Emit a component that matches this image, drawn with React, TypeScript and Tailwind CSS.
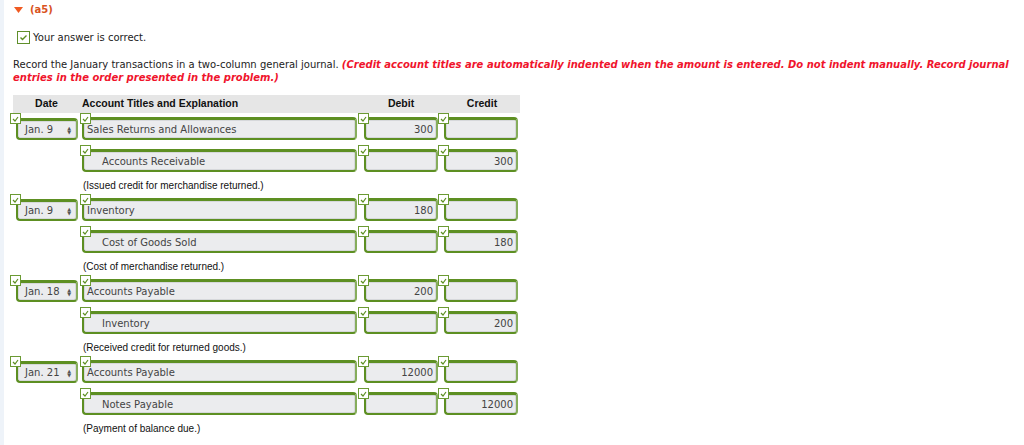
import React from "react";

type Line = { account: string; debit?: string; credit?: string };
type Entry = { date: string; lines: Line[]; note: string };

const entries: Entry[] = [
  {
    date: "Jan. 9",
    lines: [
      { account: "Sales Returns and Allowances", debit: "300" },
      { account: "Accounts Receivable", credit: "300" },
    ],
    note: "(Issued credit for merchandise returned.)",
  },
  {
    date: "Jan. 9",
    lines: [
      { account: "Inventory", debit: "180" },
      { account: "Cost of Goods Sold", credit: "180" },
    ],
    note: "(Cost of merchandise returned.)",
  },
  {
    date: "Jan. 18",
    lines: [
      { account: "Accounts Payable", debit: "200" },
      { account: "Inventory", credit: "200" },
    ],
    note: "(Received credit for returned goods.)",
  },
  {
    date: "Jan. 21",
    lines: [
      { account: "Accounts Payable", debit: "12000" },
      { account: "Notes Payable", credit: "12000" },
    ],
    note: "(Payment of balance due.)",
  },
];

const verdana = "font-['DejaVu_Sans',Verdana,sans-serif]";
const tahoma = "font-['Liberation_Sans',Arial,sans-serif]";

function Tick({ className = "" }: { className?: string }) {
  return (
    <span
      className={`absolute flex h-[11px] w-[11px] items-center justify-center border border-[#6b9a33] bg-white ${className}`}
    >
      <svg width="7" height="6" viewBox="0 0 7 6">
        <polyline points="1,3 3,5 6,1" fill="none" stroke="#5d8f22" strokeWidth="1.2" />
      </svg>
    </span>
  );
}

const box =
  "h-[23px] rounded-[4px] border-2 border-t-[3px] border-[#5d8f22] border-r-[#86ad5c] bg-[#ebecee] shadow-[inset_0_0_0_1px_#d6d8db] text-[10px] text-[#444] flex items-center";

function JournalLine({ line, date }: { line: Line; date?: string }) {
  const credit = !!line.credit;
  return (
    <div className="flex h-[32px]">
      <div className="relative w-[67px]">
        {date && (
          <>
            <Tick className="left-[-3px] top-0" />
            <div
              className={`${box} ml-[3px] mt-[5px] w-[62px] !h-[22px] justify-between pl-[7px] pr-[5px]`}
            >
              <span>{date}</span>
              <span className="flex flex-col text-[5px] leading-[4px] text-[#555]">
                <span>▲</span>
                <span>▼</span>
              </span>
            </div>
          </>
        )}
      </div>
      <div className="relative w-[278px]">
        <Tick className="left-0 top-0" />
        <div className={`${box} ml-[2px] mt-[4px] w-[275px] ${credit ? "pl-[18px]" : "pl-[3px]"}`}>
          {line.account}
        </div>
      </div>
      <div className="relative w-[80px]">
        <Tick className="left-0 top-0" />
        <div className={`${box} ml-[6px] mt-[4px] w-[74px] justify-end pr-[3px]`}>{line.debit}</div>
      </div>
      <div className="relative w-[82px]">
        <Tick className="left-0 top-0" />
        <div className={`${box} ml-[6px] mt-[4px] w-[74px] justify-end pr-[3px]`}>{line.credit}</div>
      </div>
    </div>
  );
}

export default function App() {
  return (
    <div className={`min-h-[445px] w-[1024px] border-l-[4px] border-[#eef3f9] bg-white ${verdana}`}>
      <div className="flex h-[18px] items-center gap-[7px] pl-[10px] pt-[1px]">
        <svg width="9" height="6" viewBox="0 0 9 6">
          <polygon points="0,0 9,0 4.5,6" fill="#f05a22" />
        </svg>
        <span className="text-[10px] font-bold text-[#d9531e]">(a5)</span>
      </div>
      <div className="mt-[12px] flex items-center gap-[3px] pl-[13px]">
        <span className="flex h-[13px] w-[13px] items-center justify-center border border-[#5f8f2a] bg-white">
          <svg width="9" height="7" viewBox="0 0 9 7">
            <polyline points="1.5,3.5 3.5,5.5 7.5,1.5" fill="none" stroke="#5d8f22" strokeWidth="1.4" />
          </svg>
        </span>
        <span className="text-[10px] text-[#222]">Your answer is correct.</span>
      </div>
      <p className="mt-[13px] pl-[9px] pr-[4px] text-[10px] leading-[13px] text-[#222]">
        Record the January transactions in a two-column general journal.{" "}
        <span className="font-bold italic text-[#f0142c]">
          (Credit account titles are automatically indented when the amount is entered. Do not indent manually. Record journal entries in the order presented in the problem.)
        </span>
      </p>
      <div className="ml-[9px] mt-[11px] w-[507px]">
        <div className={`flex h-[18px] items-center bg-[#e6e6e6] text-[10.5px] font-bold text-[#111] ${tahoma}`}>
          <span className="w-[67px] text-center">Date</span>
          <span className="w-[278px] pl-[2px]">Account Titles and Explanation</span>
          <span className="w-[80px] pl-[6px] text-center">Debit</span>
          <span className="w-[82px] pl-[6px] text-center">Credit</span>
        </div>
        {entries.map((e, i) => (
          <div key={i}>
            <JournalLine line={e.lines[0]} date={e.date} />
            <JournalLine line={e.lines[1]} />
            <div className={`flex h-[17px] items-center pl-[70px] text-[10px] text-[#111] ${tahoma}`}>
              {e.note}
            </div>
          </div>
        ))}
      </div>
    </div>
  );
}
